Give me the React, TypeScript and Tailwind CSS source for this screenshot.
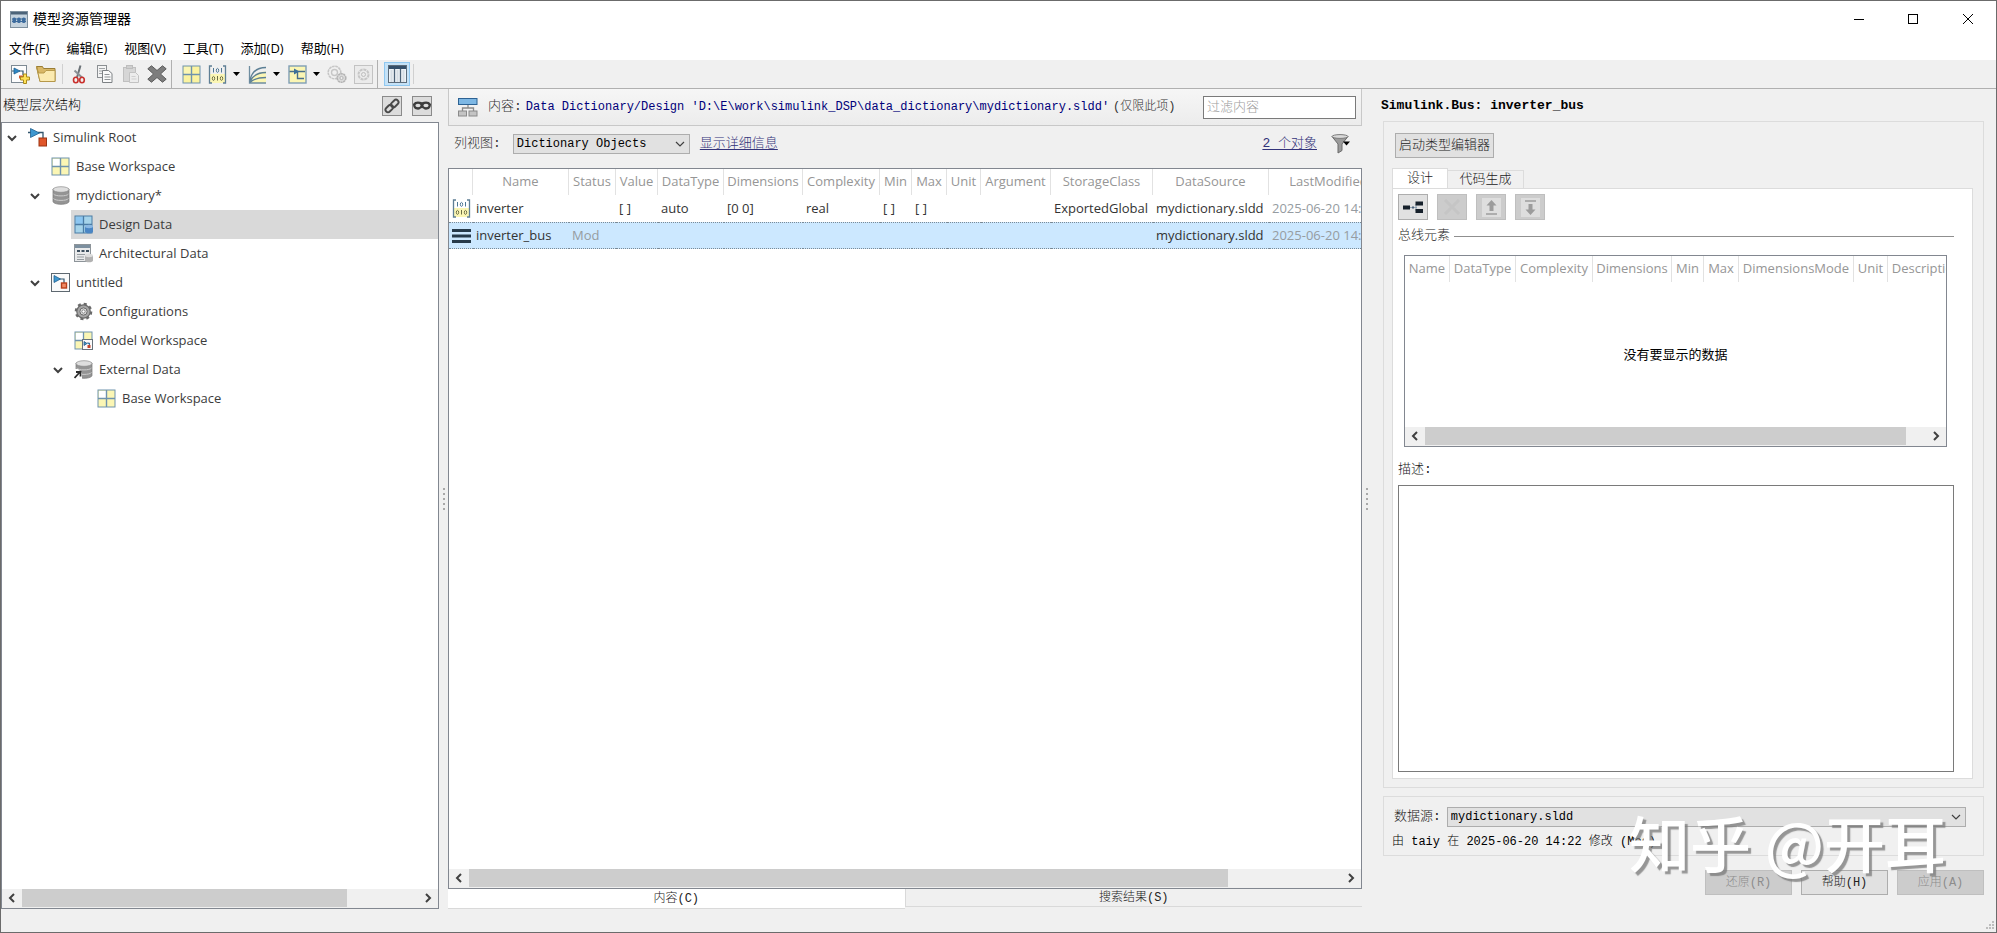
import { useState } from 'react';
import type { ReactNode } from 'react';

type TreeNode = {
  label: string;
  level: number;
  icon: ReactNode;
  open?: boolean;
};

type Column = { name: string; width: number };

/* ---------- Icons ---------- */

const Grid4 = ({ first = '#ffffff', fill = '#fbf6b4', line = '#6f93ad' }) => (
  <svg width="19" height="19" viewBox="0 0 19 19">
    <rect x="1" y="1" width="17" height="17" fill={fill} stroke={line} />
    <rect x="2" y="2" width="7" height="7" fill={first} />
    <path d="M9.500 1v17M1 9.500h17" stroke={line} strokeWidth="1.4" />
  </svg>
);

const AppIcon = () => (
  <svg width="18" height="17" viewBox="0 0 18 17">
    <rect x="0.500" y="0.500" width="17" height="16" fill="#c5d3de" stroke="#7d8f9e" />
    <rect x="1" y="1" width="16" height="2.500" fill="#4c6479" />
    <path d="M2 8h14M2 10.500h14" stroke="#3b6a9c" />
    <rect x="2.500" y="6.500" width="3.500" height="5.500" rx="1.500" fill="#3d6c9e" />
    <rect x="7.200" y="6.500" width="3.500" height="5.500" rx="1.500" fill="#3d6c9e" />
    <rect x="12" y="6.500" width="3.500" height="5.500" rx="1.500" fill="#3d6c9e" />
  </svg>
);

const SimulinkIcon = () => (
  <svg width="19" height="19" viewBox="0 0 19 19">
    <path d="M0 4.500h3M10 4.500h5v6" stroke="#33566e" strokeWidth="1.3" fill="none" />
    <path d="M2.500 0.500v9l9-4.500z" fill="#3e97cf" stroke="#1f608f" strokeWidth="0.8" />
    <rect x="11" y="10" width="7.500" height="8" fill="#e0562a" stroke="#9b3413" />
  </svg>
);

const ModelIcon = () => (
  <svg width="19" height="19" viewBox="0 0 19 19">
    <rect x="0.500" y="0.500" width="18" height="18" fill="#fafafa" stroke="#5e6870" />
    <path d="M8 6h5v4" stroke="#33566e" strokeWidth="1.2" fill="none" />
    <path d="M3 2.500v7l6.500-3.500z" fill="#3e97cf" stroke="#1f608f" strokeWidth="0.8" />
    <rect x="10.500" y="10" width="5" height="5" fill="#f08b66" stroke="#b9401b" strokeWidth="1.4" />
  </svg>
);

const NewModelIcon = () => (
  <svg width="19" height="19" viewBox="0 0 19 19">
    <rect x="0.500" y="0.500" width="15" height="17" fill="#fdfdfd" stroke="#7e8a93" />
    <path d="M1 6h3M8 6h4v4" stroke="#33566e" strokeWidth="1.2" fill="none" />
    <path d="M3 3v6l6-3z" fill="#2f88c5" stroke="#1f608f" strokeWidth="0.8" />
    <path d="M8 12h4" stroke="#d2582d" strokeWidth="3" />
    <path d="M12.500 9h3v3h3v3h-3v3.500h-3V15h-3v-3h3z" fill="#ffe257" stroke="#a98a1c" />
  </svg>
);

const FolderIcon = () => (
  <svg width="20" height="18" viewBox="0 0 20 18">
    <path d="M0.500 1.500h6l1 2h11.500v13H4z" fill="#d9b766" stroke="#9a7d35" />
    <path d="M0.500 1.500L4 16.500h15V5.500L10 5.500 8 8H2.500z" fill="#fbeab0" stroke="#b39545" strokeWidth="0.900" />
  </svg>
);

const CutIcon = () => (
  <svg width="14" height="19" viewBox="0 0 14 19" fill="none">
    <path d="M8.500 0.500L5 12.500" stroke="#6c7378" strokeWidth="2" />
    <path d="M2.500 5.500l7.500 7" stroke="#8b9196" strokeWidth="2" />
    <ellipse cx="3.800" cy="15" rx="2.300" ry="2.700" stroke="#c9302c" strokeWidth="1.600" />
    <ellipse cx="10" cy="15" rx="2.300" ry="2.700" stroke="#c9302c" strokeWidth="1.600" />
  </svg>
);

const CopyIcon = () => (
  <svg width="16" height="18" viewBox="0 0 16 18">
    <rect x="0.500" y="0.500" width="9" height="12" fill="#f4f4f4" stroke="#8b8f92" />
    <path d="M2 3.500h6M2 6h6M2 8.500h6" stroke="#a0a4a7" />
    <path d="M5.500 5.500h6l3.500 3v9H5.500z" fill="#fafafa" stroke="#7d8184" />
    <path d="M7.500 9.500h5M7.500 12h6M7.500 14.500h6" stroke="#8f9396" />
  </svg>
);

const PasteIcon = () => (
  <svg width="17" height="18" viewBox="0 0 17 18">
    <rect x="0.500" y="2.500" width="12" height="14" fill="#d6d6d6" stroke="#c0c0c0" />
    <rect x="3.500" y="0.500" width="6" height="3" fill="#cfcfcf" stroke="#bdbdbd" />
    <path d="M6.500 7.500h6l3 3v7h-9z" fill="#ececec" stroke="#c2c2c2" />
    <path d="M8.500 11.500h4M8.500 14h5" stroke="#cfcfcf" />
  </svg>
);

const DeleteIcon = () => (
  <svg width="20" height="18" viewBox="0 0 20 18">
    <path
      d="M4.500 0.800L10 5.500l5.500-4.700 3.700 3L13.500 9l5.700 5.200-3.700 3L10 12.500l-5.500 4.700-3.700-3L6.500 9 0.800 3.800z"
      fill="#7d7d7d"
      stroke="#5c5c5c"
    />
  </svg>
);

const MatrixIcon = () => (
  <svg width="19" height="19" viewBox="0 0 19 19">
    <rect x="2" y="9" width="15" height="9" fill="#fbf6b4" />
    <path d="M4 1H1.500v17H4M15 1h2.500v17H15" fill="none" stroke="#5f7f95" strokeWidth="1.3" />
    <g fill="none" stroke="#4d7694" strokeWidth="1">
      <path d="M5.500 3v4.500M9.500 3.400c-1.600 0-1.600 4 0 4s1.600-4 0-4M13.500 3v4.500" />
      <path d="M5.500 11.400c-1.600 0-1.600 4 0 4s1.600-4 0-4M9.500 11v4.500M13.500 11.400c-1.600 0-1.600 4 0 4s1.600-4 0-4" stroke="#6c6d45" />
    </g>
  </svg>
);

const CurvesIcon = () => (
  <svg width="19" height="19" viewBox="0 0 19 19" fill="none">
    <path d="M2 18C5 9 10 6.500 18 6.500V18z" fill="#fbf6b4" />
    <path d="M1.500 1v17H18" stroke="#6f8da0" strokeWidth="1.300" />
    <path d="M2 15C4 6 9 2.500 18 2.500M2 16.500C5 10 10 7.500 18 7.500M2 17.500c4-4 9-5 16-5" stroke="#5c7f95" strokeWidth="1.300" />
  </svg>
);

const SignalIcon = () => (
  <svg width="19" height="19" viewBox="0 0 19 19">
    <rect x="1" y="1" width="17" height="17" fill="#fbf6b4" stroke="#7f9eb5" strokeWidth="1.400" />
    <path d="M1.500 6.500H17M9.500 6.500v7H16" stroke="#4a6f8b" strokeWidth="1.400" fill="none" />
    <path d="M6 3.500l5.500 3L6 9.500z" fill="#3d7199" />
  </svg>
);

const GearShape = ({ size = 19, body = '#a6a6a6', line = '#6a6a6a' }) => (
  <svg width={size} height={size} viewBox="0 0 19 19">
    <circle cx="9.500" cy="9.500" r="7.600" fill="none" stroke={line} strokeWidth="2.400" strokeDasharray="3 2.970" />
    <circle cx="9.500" cy="9.500" r="6.700" fill={body} stroke={line} strokeWidth="1.200" />
    <circle cx="9.500" cy="9.500" r="3.600" fill="#e6e6e6" stroke={line} strokeWidth="1" />
    <circle cx="9.500" cy="9.500" r="1.700" fill="#ffffff" stroke={line} strokeWidth="0.800" />
  </svg>
);

const GearsDisabledIcon = () => (
  <svg width="20" height="19" viewBox="0 0 20 19" fill="none">
    <circle cx="7.500" cy="7.500" r="6.300" stroke="#c6c6c6" strokeWidth="1.600" strokeDasharray="2.700 0.600" />
    <circle cx="7.500" cy="7.500" r="3" stroke="#c6c6c6" strokeWidth="1.400" />
    <circle cx="14.500" cy="13" r="4.300" fill="#dcdcdc" stroke="#b4b4b4" strokeWidth="1.600" strokeDasharray="2.200 0.500" />
    <circle cx="14.500" cy="13" r="1.600" fill="#eeeeee" stroke="#b4b4b4" />
  </svg>
);

const GearBoxDisabledIcon = () => (
  <svg width="19" height="19" viewBox="0 0 19 19" fill="none">
    <rect x="0.500" y="0.500" width="18" height="18" fill="#ebebeb" stroke="#c3c3c3" />
    <circle cx="9.500" cy="9.500" r="5" stroke="#c6c6c6" strokeWidth="2" strokeDasharray="3 0.800" />
    <circle cx="9.500" cy="9.500" r="2" fill="#ebebeb" stroke="#bdbdbd" />
  </svg>
);

const ColumnsIcon = () => (
  <svg width="19" height="18" viewBox="0 0 19 18">
    <rect x="0.500" y="0.500" width="18" height="17" fill="#eef3f7" stroke="#5d6c7a" />
    <rect x="1" y="1" width="17" height="3" fill="#34506b" />
    <path d="M6.500 4v13M12.500 4v13" stroke="#4b6176" strokeWidth="1.300" />
    <path d="M3.500 5v12M9.500 5v12M15.500 5v12" stroke="#d5dde4" strokeWidth="2" />
  </svg>
);

const DatabaseIcon = ({ link = false }) => (
  <svg width="19" height="19" viewBox="0 0 19 19">
    <path d="M2 3v12.500c0 1.500 3.500 2.800 8 2.800s8-1.300 8-2.800V3z" fill="#949494" stroke="#777777" strokeWidth="0.700" />
    <ellipse cx="10" cy="3.500" rx="8" ry="2.800" fill="#dedede" stroke="#8d8d8d" strokeWidth="0.700" />
    <path d="M2.500 8c1 1.300 4 1.900 7.500 1.900s6.500-.6 7.500-1.900M2.500 12.500c1 1.300 4 1.900 7.500 1.900s6.500-.6 7.500-1.900" stroke="#cccccc" fill="none" />
    {link && (
      <>
        <path d="M0 9h4l4 4v6H0z" fill="#ffffff" />
        <path d="M0.500 18l5-5.500M2 12h4.500v4.500" stroke="#2c2c2c" strokeWidth="1.800" fill="none" />
      </>
    )}
  </svg>
);

const DesignDataIcon = () => (
  <svg width="19" height="19" viewBox="0 0 19 19">
    <rect x="1" y="1" width="17" height="17" fill="#a5d3ea" stroke="#4b7ca5" />
    <rect x="2" y="2" width="7" height="7" fill="#8cc6f1" />
    <path d="M9.500 1v17M1 9.500h17" stroke="#4b7ca5" strokeWidth="1.300" />
    <path d="M11 11.500v5c0 1 1.700 1.800 4 1.800s4-.8 4-1.800v-5z" fill="#4b86c4" />
    <ellipse cx="15" cy="11.500" rx="4" ry="1.700" fill="#8bb8e3" />
  </svg>
);

const ArchDataIcon = () => (
  <svg width="19" height="19" viewBox="0 0 19 19">
    <rect x="0.500" y="0.500" width="16" height="17" fill="#e9eaeb" stroke="#8d9499" />
    <rect x="1" y="1" width="15" height="3" fill="#7c8f9f" />
    <path d="M3 7h3M7.500 7h3M12 7h3" stroke="#3d4f5e" strokeWidth="2" />
    <path d="M3 10.500h8M3 13h7M3 15.500h7" stroke="#979da1" />
    <path d="M11 11.500v5c0 1 1.700 1.800 4 1.800s4-.8 4-1.800v-5z" fill="#b2b2b2" />
    <ellipse cx="15" cy="11.500" rx="4" ry="1.700" fill="#dddddd" />
  </svg>
);

const ModelWorkspaceIcon = () => (
  <svg width="19" height="19" viewBox="0 0 19 19">
    <rect x="1" y="1" width="17" height="17" fill="#fbf6b4" stroke="#6f93ad" />
    <rect x="2" y="2" width="7" height="7" fill="#ffffff" />
    <path d="M9.500 1v17M1 9.500h17" stroke="#6f93ad" strokeWidth="1.300" />
    <rect x="8.500" y="8.500" width="10" height="10" fill="#fafafa" stroke="#68737b" />
    <path d="M10 10.500v4l3-2zM13 12h2.500v2" stroke="#2c5d80" fill="#3e97cf" strokeWidth="0.800" />
    <rect x="13.500" y="14" width="3" height="3" fill="#c5452a" />
  </svg>
);

const HierarchyIcon = () => (
  <svg width="20" height="19" viewBox="0 0 20 19">
    <path d="M10 6v4M4.500 13v-3h11v3" stroke="#8a8a8a" strokeWidth="1.300" fill="none" />
    <rect x="0.500" y="0.500" width="18.500" height="6" fill="#7db7e4" stroke="#2d6293" />
    <rect x="0.500" y="13" width="8" height="5" fill="#c4c4c4" stroke="#8a8a8a" />
    <rect x="11" y="13" width="8" height="5" fill="#c4c4c4" stroke="#8a8a8a" />
  </svg>
);

const BusIcon = () => (
  <svg width="19" height="14" viewBox="0 0 19 14">
    <path d="M0 1.500h19M0 7h19M0 12.500h19" stroke="#263a4a" strokeWidth="3" />
  </svg>
);

const FunnelIcon = () => (
  <svg width="19" height="20" viewBox="0 0 19 20">
    <path d="M1 2.500l6 7.500v9l4-2.500V10l6-7.500z" fill="#9b9b9b" stroke="#6b6b6b" />
    <ellipse cx="9" cy="2.500" rx="8" ry="1.900" fill="#d9d9d9" stroke="#7b7b7b" />
    <path d="M12 7.500h7l-3.500 4z" fill="#000000" />
  </svg>
);

const LinkIcon = () => (
  <svg width="16" height="16" viewBox="0 0 16 16" fill="none" stroke="#484848" strokeWidth="1.900">
    <rect x="6.500" y="3" width="8.500" height="5" rx="2.500" transform="rotate(-45 10.700 5.500)" />
    <rect x="1" y="8" width="8.500" height="5" rx="2.500" transform="rotate(-45 5.300 10.500)" />
  </svg>
);

const MaskIcon = () => (
  <svg width="18" height="9" viewBox="0 0 18 9">
    <path
      d="M0 3C2-.3 6 0 9 1.300 12 0 16-.3 18 3c0 3.800-2 5.700-5 5.700-2 0-3-1.700-4-1.700s-2 1.700-4 1.700c-3 0-5-1.900-5-5.700z"
      fill="#3c3c3c"
    />
    <ellipse cx="5" cy="4.500" rx="2.600" ry="1.700" fill="#dcdcdc" />
    <ellipse cx="13" cy="4.500" rx="2.600" ry="1.700" fill="#dcdcdc" />
  </svg>
);

const AddElementIcon = () => (
  <svg width="20" height="13" viewBox="0 0 20 13">
    <path d="M6 6.500h8M13 3v7" stroke="#8ea0b1" strokeWidth="1" />
    <rect x="0" y="4.500" width="7" height="4" fill="#16202b" />
    <rect x="9" y="5.500" width="2" height="2" fill="#4a6078" />
    <rect x="12.500" y="0.500" width="7.500" height="4" fill="#16202b" />
    <rect x="12.500" y="8" width="7.500" height="4" fill="#16202b" />
  </svg>
);

const RemoveElementIcon = () => (
  <svg width="18" height="18" viewBox="0 0 18 18">
    <path d="M2 2l14 14M16 2L2 16" stroke="#c5c5c5" strokeWidth="3" />
  </svg>
);

const MoveIcon = ({ down = false }) => (
  <svg width="19" height="19" viewBox="0 0 19 19" className={down ? 'rotate-180' : ''}>
    <rect width="19" height="19" fill="#dedede" />
    <path d="M9.500 2l5 5.500h-3V13h-4V7.500h-3z" fill="#9c9c9c" />
    <path d="M4 16h11" stroke="#9c9c9c" strokeWidth="1.500" />
  </svg>
);

const Chevron = ({ dir = 'down', thin = false }: { dir?: 'down' | 'left' | 'right'; thin?: boolean }) => {
  const paths = {
    down: 'M1 3l4 4 4-4',
    left: 'M7 1L3 5l4 4',
    right: 'M3 1l4 4-4 4',
  };
  return (
    <svg width="10" height="10" viewBox="0 0 10 10">
      <path d={paths[dir]} fill="none" stroke="#404040" strokeWidth={thin ? 1.2 : 2} />
    </svg>
  );
};

/* ---------- Data ---------- */

const menus = ['文件(F)', '编辑(E)', '视图(V)', '工具(T)', '添加(D)', '帮助(H)'];

const tree: TreeNode[] = [
  { label: 'Simulink Root', level: 0, icon: <SimulinkIcon />, open: true },
  { label: 'Base Workspace', level: 1, icon: <Grid4 /> },
  { label: 'mydictionary*', level: 1, icon: <DatabaseIcon />, open: true },
  { label: 'Design Data', level: 2, icon: <DesignDataIcon /> },
  { label: 'Architectural Data', level: 2, icon: <ArchDataIcon /> },
  { label: 'untitled', level: 1, icon: <ModelIcon />, open: true },
  { label: 'Configurations', level: 2, icon: <GearShape /> },
  { label: 'Model Workspace', level: 2, icon: <ModelWorkspaceIcon /> },
  { label: 'External Data', level: 2, icon: <DatabaseIcon link />, open: true },
  { label: 'Base Workspace', level: 3, icon: <Grid4 /> },
];

const indents = ['pl-0', 'pl-[23px]', 'pl-[46px]', 'pl-[69px]'];

const columns: Column[] = [
  { name: '', width: 24 },
  { name: 'Name', width: 96 },
  { name: 'Status', width: 47 },
  { name: 'Value', width: 42 },
  { name: 'DataType', width: 66 },
  { name: 'Dimensions', width: 79 },
  { name: 'Complexity', width: 77 },
  { name: 'Min', width: 32 },
  { name: 'Max', width: 35 },
  { name: 'Unit', width: 34 },
  { name: 'Argument', width: 70 },
  { name: 'StorageClass', width: 102 },
  { name: 'DataSource', width: 116 },
  { name: 'LastModified', width: 120 },
];

const rows = [
  ['inverter', '', '[ ]', 'auto', '[0 0]', 'real', '[ ]', '[ ]', '', '', 'ExportedGlobal', 'mydictionary.sldd', '2025-06-20 14:22'],
  ['inverter_bus', 'Mod', '', '', '', '', '', '', '', '', '', 'mydictionary.sldd', '2025-06-20 14:22'],
];

const busColumns: Column[] = [
  { name: 'Name', width: 45 },
  { name: 'DataType', width: 66 },
  { name: 'Complexity', width: 77 },
  { name: 'Dimensions', width: 79 },
  { name: 'Min', width: 32 },
  { name: 'Max', width: 35 },
  { name: 'DimensionsMode', width: 115 },
  { name: 'Unit', width: 34 },
  { name: 'Description', width: 78 },
];

/* ---------- Parts ---------- */

const ToolButton = ({ label, children, active }: { label: string; children: ReactNode; active?: boolean }) => (
  <button
    aria-label={label}
    className={`flex h-6 w-[26px] items-center justify-center ${active ? 'border border-[#90c8f0] bg-[#c5e2f7]' : ''}`}
  >
    {children}
  </button>
);

const ToolArrow = ({ label }: { label: string }) => (
  <button aria-label={label} className="flex h-6 w-3.5 items-center justify-center pr-0.5">
    <svg width="7" height="4" viewBox="0 0 7 4">
      <path d="M0 0h7L3.500 4z" fill="#000000" />
    </svg>
  </button>
);

const ScrollBar = ({ thumb }: { thumb: string }) => (
  <div className="flex h-[19px] shrink-0 bg-[#f0f0f0] pb-px">
    <button aria-label="向左滚动" className="flex w-5 items-center justify-center">
      <Chevron dir="left" />
    </button>
    <div className="flex-1">
      <div className={`h-full bg-[#cdcdcd] ${thumb}`} />
    </div>
    <button aria-label="向右滚动" className="flex w-5 items-center justify-center">
      <Chevron dir="right" />
    </button>
  </div>
);

const Splitter = () => (
  <div className="flex flex-col items-center justify-center gap-[3px]">
    {[0, 1, 2, 3, 4].map((i) => (
      <span key={i} className="h-0.5 w-0.5 bg-[#a8a8a8]" />
    ))}
  </div>
);

const HeadCells = ({ cols }: { cols: Column[] }) => (
  <>
    {cols.map((col) => (
      <th
        key={col.name}
        style={{ width: col.width }}
        className="overflow-hidden border-r border-[#e2e2e2] p-0 text-center font-normal whitespace-nowrap text-[#969696]"
      >
        {col.name}
      </th>
    ))}
  </>
);

const App = () => {
  const [selectedNode, setSelectedNode] = useState(3);
  const [selectedRow, setSelectedRow] = useState(1);

  return (
    <div className="relative flex h-screen flex-col overflow-hidden border border-[#6b6b6b] bg-[#f0f0f0] font-['Liberation_Mono','Noto_Sans_CJK_SC',monospace] text-xs font-light text-black">
      {/* Title bar */}
      <header className="flex h-9 shrink-0 items-center bg-white pl-[9px] font-['Noto_Sans_CJK_SC',sans-serif]">
        <AppIcon />
        <h1 className="ml-[5px] flex-1 pb-0.5 text-sm font-normal">模型资源管理器</h1>
        <button aria-label="最小化" className="flex h-full w-[54px] items-center justify-center">
          <svg width="10" height="10"><path d="M0 5.500h10" stroke="#000" /></svg>
        </button>
        <button aria-label="最大化" className="flex h-full w-[54px] items-center justify-center">
          <svg width="10" height="10"><rect x="0.500" y="0.500" width="9" height="9" fill="none" stroke="#000" /></svg>
        </button>
        <button aria-label="关闭" className="flex h-full w-14 items-center justify-center">
          <svg width="10" height="10"><path d="M0 0l10 10M10 0L0 10" stroke="#000" /></svg>
        </button>
      </header>

      {/* Menu */}
      <nav className="flex h-[23px] shrink-0 items-center gap-[17px] bg-white pl-2 font-['Open_Sans','Noto_Sans_CJK_SC',sans-serif] text-[13px] font-normal">
        {menus.map((m) => (
          <button key={m}>{m}</button>
        ))}
      </nav>

      {/* Toolbar */}
      <div className="flex h-[29px] shrink-0 items-center border-b border-[#b0b0b0] pl-1.5">
        <ToolButton label="新建模型"><NewModelIcon /></ToolButton>
        <ToolButton label="打开"><FolderIcon /></ToolButton>
        <span className="mx-[3px] h-5 w-px bg-[#d0d0d0]" />
        <ToolButton label="剪切"><CutIcon /></ToolButton>
        <ToolButton label="复制"><CopyIcon /></ToolButton>
        <ToolButton label="粘贴"><PasteIcon /></ToolButton>
        <ToolButton label="删除"><DeleteIcon /></ToolButton>
        <span className="mr-1.5 ml-px h-full w-px bg-[#b0b0b0]" />
        <ToolButton label="添加变量"><Grid4 fill="#fbf3a0" first="#fbf6b4" /></ToolButton>
        <ToolButton label="添加参数"><MatrixIcon /></ToolButton>
        <ToolArrow label="参数选项" />
        <ToolButton label="添加查找表"><CurvesIcon /></ToolButton>
        <ToolArrow label="查找表选项" />
        <ToolButton label="添加信号"><SignalIcon /></ToolButton>
        <ToolArrow label="信号选项" />
        <ToolButton label="添加配置"><GearsDisabledIcon /></ToolButton>
        <ToolButton label="添加配置引用"><GearBoxDisabledIcon /></ToolButton>
        <span className="mr-1.5 ml-px h-full w-px bg-[#b0b0b0]" />
        <ToolButton label="显示对话框窗格" active><ColumnsIcon /></ToolButton>
        <span className="ml-[3px] h-5 w-px bg-[#d0d0d0]" />
      </div>

      <div className="grid min-h-0 flex-1 grid-cols-[438fr_9px_914fr_9px_625fr] pb-[23px]">
        {/* Model hierarchy */}
        <aside className="flex min-w-0 flex-col">
          <div className="flex h-[33px] shrink-0 items-center gap-2.5 pr-[7px] pl-0.5">
            <h2 className="flex-1 text-[13px]">模型层次结构</h2>
            <button aria-label="链接" className="flex h-5 w-5 items-center justify-center border border-[#8a8a8a] bg-[#dcdcdc]">
              <LinkIcon />
            </button>
            <button aria-label="封装" className="flex h-5 w-5 items-center justify-center border border-[#8a8a8a] bg-[#dcdcdc]">
              <MaskIcon />
            </button>
          </div>
          <div className="flex min-h-0 flex-1 flex-col border border-[#828790] bg-white font-['Open_Sans',sans-serif] text-[13px] font-normal text-[#3c3c3c]">
            <ul className="flex-1 overflow-hidden">
              {tree.map((node, i) => (
                <li key={i} className={`flex h-[29px] ${indents[node.level]}`}>
                  <span className="flex w-[23px] items-center justify-center pr-[3px]">{node.open && <Chevron />}</span>
                  <button
                    onClick={() => setSelectedNode(i)}
                    className={`flex flex-1 items-center gap-1.5 pl-[3px] ${i === selectedNode ? 'bg-[#d9d9d9]' : ''}`}
                  >
                    {node.icon}
                    {node.label}
                  </button>
                </li>
              ))}
            </ul>
            <ScrollBar thumb="w-[82%]" />
          </div>
        </aside>

        <Splitter />

        {/* Contents */}
        <main className="flex min-w-0 flex-col">
          <div className="flex h-[37px] shrink-0 items-center border border-t-0 border-[#c8c8c8] bg-linear-to-b from-[#f6f6f6] to-[#ececec] pr-[5px] pl-[9px] whitespace-nowrap">
            <HierarchyIcon />
            <span className="ml-2.5 text-[13px] text-[#333333]">内容:</span>
            <span className="ml-1 text-[#00007a]">
              Data Dictionary/Design 'D:\E\work\simulink_DSP\data_dictionary\mydictionary.sldd'
            </span>
            <span className="ml-1 text-xs text-[#333333]">(仅限此项)</span>
            <input
              aria-label="过滤内容"
              placeholder="过滤内容"
              className="ml-auto h-[23px] w-[153px] border border-[#7a7a7a] bg-white px-[3px] text-[13px] placeholder:text-[#a0a0a0]"
            />
          </div>
          <div className="flex h-[42px] shrink-0 items-center pr-3 pb-1.5 pl-1.5 text-[13px] text-[#333333]">
            <label htmlFor="column-view">列视图:</label>
            <div className="relative ml-3">
              <select
                id="column-view"
                className="block h-5 w-[177px] appearance-none border border-[#adadad] bg-[#e1e1e1] px-[3px] text-xs text-black"
              >
                <option>Dictionary Objects</option>
              </select>
              <span className="pointer-events-none absolute top-[5px] right-[5px]"><Chevron thin /></span>
            </div>
            <a href="#details" className="ml-2.5 text-[#33337a] underline underline-offset-2">显示详细信息</a>
            <a href="#objects" className="ml-auto text-[#33337a] underline underline-offset-2">2 个对象</a>
            <button aria-label="过滤" className="ml-3.5"><FunnelIcon /></button>
          </div>

          <div className="flex min-h-0 flex-1 flex-col border border-[#828790] bg-white">
            <div className="min-h-0 flex-1 overflow-hidden">
              <table className="w-[940px] table-fixed border-separate border-spacing-0 font-['Open_Sans',sans-serif] text-[13px] font-normal text-[#333333]">
                <thead>
                  <tr className="h-[26px]">
                    <HeadCells cols={columns} />
                  </tr>
                </thead>
                <tbody>
                  {rows.map((row, r) => (
                    <tr key={r} onClick={() => setSelectedRow(r)} className={`h-[27px] ${r === selectedRow ? 'bg-[#cce8ff]' : ''}`}>
                      <td className={`border-y border-dotted p-0 pl-[3px] ${r === selectedRow ? 'border-[#7a8a96]' : 'border-transparent'}`}>
                        {r === 0 ? <MatrixIcon /> : <BusIcon />}
                      </td>
                      {row.map((cell, c) => (
                        <td
                          key={c}
                          className={`overflow-hidden border-y border-dotted p-0 pl-[3px] whitespace-nowrap ${r === selectedRow ? 'border-[#7a8a96]' : 'border-transparent'} ${c === 1 || c === 12 ? 'text-[#969ca1]' : ''}`}
                        >
                          {cell}
                        </td>
                      ))}
                    </tr>
                  ))}
                </tbody>
              </table>
            </div>
            <ScrollBar thumb="w-[87%]" />
          </div>
          <div className="flex h-5 shrink-0 items-start text-[#222222]">
            <button className="h-5 flex-1 border-b border-[#d9d9d9] bg-white">内容(C)</button>
            <button className="h-[18px] flex-1 border-b border-l border-[#d9d9d9]">搜索结果(S)</button>
          </div>
        </main>

        <Splitter />

        {/* Dialog pane */}
        <section className="flex min-w-0 flex-col pr-3 pl-3 text-[#222222]">
          <h2 className="-ml-0.5 h-8 shrink-0 pt-2 text-[13px] font-bold text-black">Simulink.Bus: inverter_bus</h2>

          <div className="flex min-h-0 flex-1 flex-col border border-[#dcdcdc] px-2 pt-[11px] pb-2">
            <button className="ml-[3px] h-[25px] w-[99px] shrink-0 self-start border border-[#adadad] bg-[#e1e1e1] text-[13px]">
              启动类型编辑器
            </button>
            <div className="mt-2.5 flex h-5 shrink-0 items-end text-[13px]">
              <button className="h-5 w-14 border border-b-0 border-[#dcdcdc] bg-white">设计</button>
              <button className="h-[18px] w-[76px] border border-b-0 border-l-0 border-[#dcdcdc]">代码生成</button>
            </div>
            <div className="mr-0.5 flex min-h-0 flex-1 flex-col border border-[#dcdcdc] bg-white pt-[5px] pr-[18px] pb-1.5 pl-[5px]">
              <div className="flex shrink-0 gap-[9px]">
                <button aria-label="添加元素" className="flex h-[26px] w-[30px] items-center justify-center border border-[#adadad] bg-[#e1e1e1]">
                  <AddElementIcon />
                </button>
                <button disabled aria-label="删除元素" className="flex h-[26px] w-[30px] items-center justify-center border border-[#bfbfbf] bg-[#cccccc]">
                  <RemoveElementIcon />
                </button>
                <button disabled aria-label="上移" className="flex h-[26px] w-[30px] items-center justify-center border border-[#bfbfbf] bg-[#cccccc]">
                  <MoveIcon />
                </button>
                <button disabled aria-label="下移" className="flex h-[26px] w-[30px] items-center justify-center border border-[#bfbfbf] bg-[#cccccc]">
                  <MoveIcon down />
                </button>
              </div>
              <div className="mt-1.5 flex h-5 shrink-0 items-center gap-1 text-[13px]">
                总线元素
                <span className="h-px flex-1 bg-[#8f8f8f]" />
              </div>
              <div className="mt-[9px] mr-[7px] ml-1.5 flex h-48 shrink-0 flex-col border border-[#828790] font-['Open_Sans','Noto_Sans_CJK_SC',sans-serif] text-[13px] font-normal">
                <div className="overflow-hidden">
                  <table className="w-[561px] table-fixed border-separate border-spacing-0">
                    <thead>
                      <tr className="h-[26px]">
                        <HeadCells cols={busColumns} />
                      </tr>
                    </thead>
                  </table>
                </div>
                <p className="flex flex-1 items-center justify-center text-black">没有要显示的数据</p>
                <ScrollBar thumb="w-[96%]" />
              </div>
              <label htmlFor="description" className="mt-3.5 h-6 shrink-0 text-[13px]">描述:</label>
              <textarea id="description" className="min-h-0 w-full flex-1 resize-none border border-[#7a7a7a] bg-white" />
            </div>
          </div>

          <div className="mt-2 shrink-0 border border-[#dcdcdc] px-2 pt-2.5 pb-[3px]">
            <div className="flex items-center gap-1.5 pr-[9px] pl-0.5">
              <label htmlFor="source" className="text-[13px]">数据源:</label>
              <div className="relative flex-1">
                <select
                  id="source"
                  className="block h-5 w-full appearance-none border border-[#adadad] bg-[#e1e1e1] px-[3px] text-xs text-black"
                >
                  <option>mydictionary.sldd</option>
                </select>
                <span className="pointer-events-none absolute top-[5px] right-[5px]"><Chevron thin /></span>
              </div>
            </div>
            <p className="mt-[5px] leading-5 text-black">由 taiy 在 2025-06-20 14:22 修改 (Mod)</p>
          </div>

          <div className="mt-3.5 mb-3.5 flex shrink-0 justify-end gap-[9px]">
            <button disabled className="h-[25px] w-[87px] border border-[#bfbfbf] bg-[#cccccc] text-[#8c8c8c]">还原(R)</button>
            <button className="h-[25px] w-[87px] border border-[#adadad] bg-[#e1e1e1]">帮助(H)</button>
            <button disabled className="h-[25px] w-[87px] border border-[#bfbfbf] bg-[#cccccc] text-[#8c8c8c]">应用(A)</button>
          </div>
        </section>
      </div>

      {/* Watermark */}
      <p className="pointer-events-none absolute right-[50px] bottom-[60px] font-['Noto_Sans_CJK_SC',sans-serif] text-[61px] leading-none font-medium text-white text-shadow-[3px_3px_1px_rgb(120_120_120/0.75)]">
        知乎 @开耳
      </p>

      {/* Resize grip */}
      <svg width="9" height="9" viewBox="0 0 9 9" className="absolute right-0.5 bottom-0.5">
        <path d="M7 1h2M4 4h2M7 4h2M1 7h2M4 7h2M7 7h2" stroke="#bdbdbd" strokeWidth="2" />
      </svg>
    </div>
  );
};

export default App;
